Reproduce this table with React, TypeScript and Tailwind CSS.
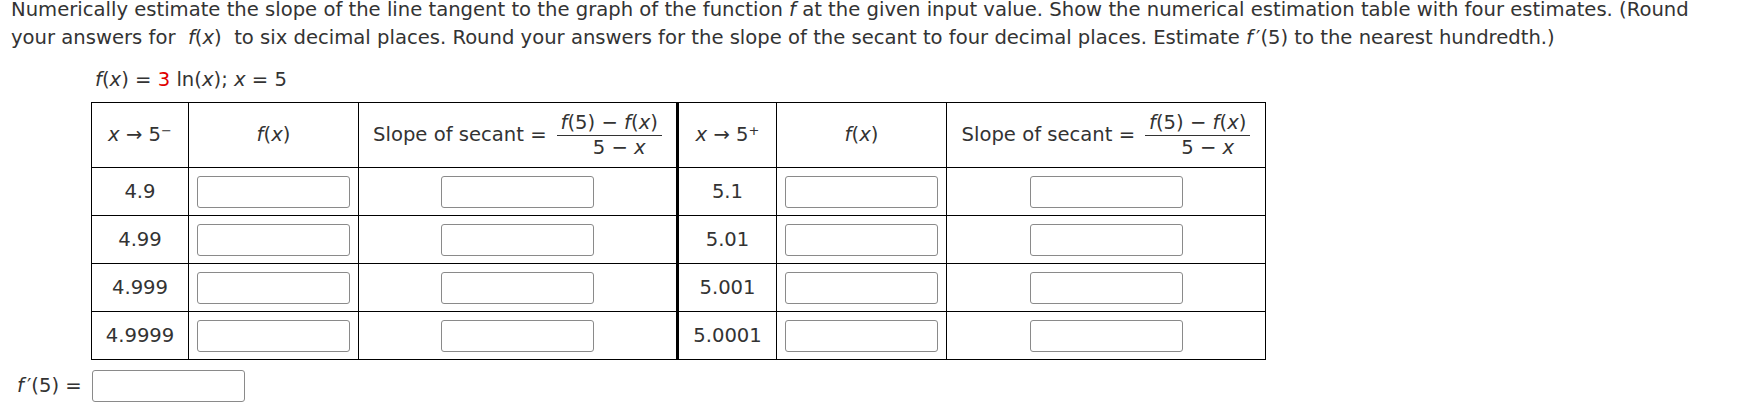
import React from 'react';

const leftRows = ['4.9', '4.99', '4.999', '4.9999'];
const rightRows = ['5.1', '5.01', '5.001', '5.0001'];

function Box({ className = '' }: { className?: string }) {
  return <div className={`h-[32px] w-[153px] rounded-[3px] border border-[#8a8a8a] bg-white ${className}`} />;
}

function Prime() {
  return (
    <>
      <i>f</i>
      <span className="ml-[3px]">′</span>
    </>
  );
}

function SecantHeader() {
  return (
    <div className="flex items-center justify-center gap-[10px]">
      <span>Slope of secant =</span>
      <span className="inline-flex flex-col items-center leading-[24px]">
        <span className="border-b border-[#333] px-[4px]">
          <i>f</i>(5) − <i>f</i>(<i>x</i>)
        </span>
        <span className="pl-[20px]">
          5 − <i>x</i>
        </span>
      </span>
    </div>
  );
}

export default function App() {
  return (
    <div className="h-[412px] w-[1744px] overflow-hidden bg-white pl-[11px] font-['DejaVu_Sans',sans-serif] text-[19.6px] text-[#333]">
      <p className="-mt-[4.5px] whitespace-nowrap leading-[28px]">
        Numerically estimate the slope of the line tangent to the graph of the function <i>f</i> at the given input
        value. Show the numerical estimation table with four estimates. (Round
        <br />
        your answers for&nbsp; <i>f</i>(<i>x</i>)&nbsp; to six decimal places. Round your answers for the slope of the
        secant to four decimal places. Estimate <Prime />(5) to the nearest hundredth.)
      </p>

      <div className="ml-[84px] mt-[14.5px] leading-[28px]">
        <i>f</i>(<i>x</i>) = <span className="text-[#e00000]">3</span> ln(<i>x</i>); <i>x</i> = 5
      </div>

      <table className="ml-[80px] mt-[8px] border-collapse">
        <thead>
          <tr className="h-[65px]">
            <th className="w-[97px] border border-black font-normal">
              <i>x</i> → 5<sup className="text-[13px]">−</sup>
            </th>
            <th className="w-[169px] border border-black font-normal">
              <i>f</i>(<i>x</i>)
            </th>
            <th className="w-[319px] border border-black border-r-[3px] font-normal">
              <SecantHeader />
            </th>
            <th className="w-[99px] border border-black font-normal">
              <i>x</i> → 5<sup className="text-[13px]">+</sup>
            </th>
            <th className="w-[169px] border border-black font-normal">
              <i>f</i>(<i>x</i>)
            </th>
            <th className="w-[319px] border border-black font-normal">
              <SecantHeader />
            </th>
          </tr>
        </thead>
        <tbody>
          {leftRows.map((l, i) => (
            <tr key={l} className="h-[48px]">
              <td className="border border-black text-center">{l}</td>
              <td className="border border-black px-[8px]">
                <Box />
              </td>
              <td className="border border-black border-r-[3px]">
                <Box className="mx-auto" />
              </td>
              <td className="border border-black text-center">{rightRows[i]}</td>
              <td className="border border-black px-[8px]">
                <Box />
              </td>
              <td className="border border-black">
                <Box className="mx-auto" />
              </td>
            </tr>
          ))}
        </tbody>
      </table>

      <div className="mt-[10px] flex items-center gap-[10px] pl-[6px]">
        <span>
          <Prime />(5) =
        </span>
        <Box />
      </div>
    </div>
  );
}
